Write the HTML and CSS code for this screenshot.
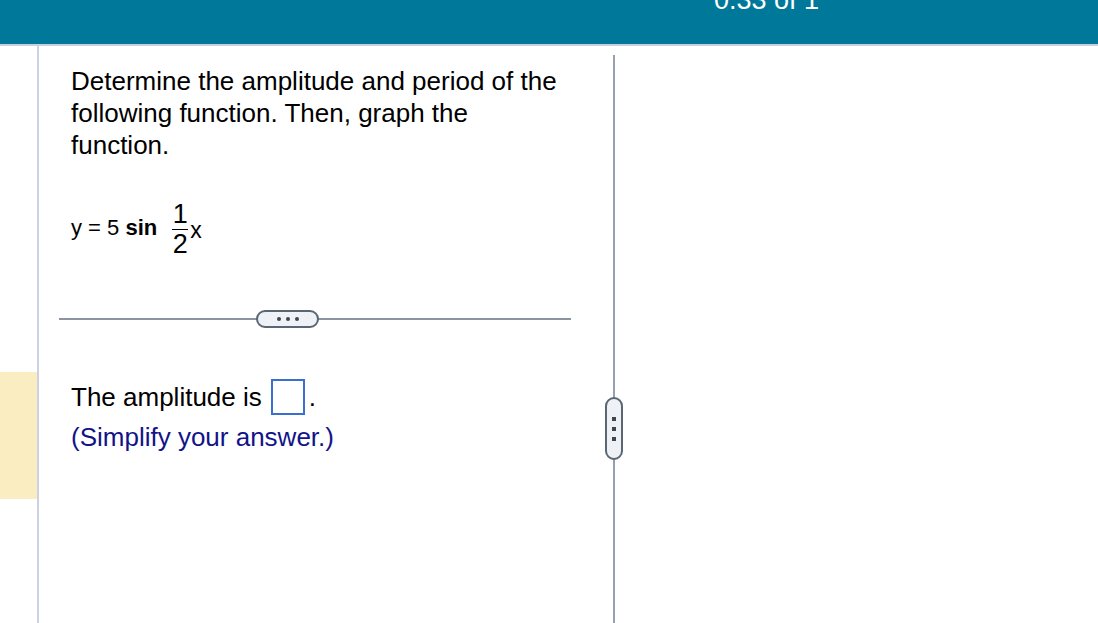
FILE: index.html
```html
<!DOCTYPE html>
<html>
<head>
<meta charset="utf-8">
<link rel="stylesheet" href="styles.css">
</head>
<body>
<header class="topbar">
  <div class="score">0.33 of 1</div>
</header>
<div class="main">
  <aside class="gutter">
    <div class="marker"></div>
  </aside>
  <section class="question">
    <p class="prompt">Determine the amplitude and period of the following function. Then, graph the function.</p>
    <div class="equation">
      <span>y = 5 <b>sin</b></span>
      <span class="frac"><span class="num">1</span><span class="den">2</span></span>
      <span class="var">x</span>
    </div>
    <div class="divider">
      <button class="pill"><span class="dot"></span><span class="dot"></span><span class="dot"></span></button>
    </div>
    <div class="answer">
      <div class="ans-line">The amplitude is <span class="box"></span>.</div>
      <div class="hint">(Simplify your answer.)</div>
    </div>
  </section>
  <div class="splitter">
    <div class="vpill"><span class="sq"></span><span class="sq"></span><span class="sq"></span></div>
  </div>
  <section class="right"></section>
</div>
</body>
</html>
```
FILE: styles.css
```css
* { box-sizing: border-box; }
html, body { margin: 0; padding: 0; }
body {
  width: 1098px;
  height: 623px;
  overflow: hidden;
  background: #fff;
  font-family: "Liberation Sans", Arial, sans-serif;
  color: #000;
}
.topbar {
  height: 46px;
  background: #007899;
  border-bottom: 2px solid #c9cfe0;
  position: relative;
}
.score {
  position: absolute;
  left: 714px;
  top: -15px;
  color: #fff;
  font-size: 27px;
  line-height: 30px;
}
.main {
  display: flex;
  height: 577px;
}
.gutter {
  width: 39px;
  border-right: 2px solid #cdd2e2;
  padding-top: 326px;
}
.marker {
  height: 127px;
  width: 37px;
  background: #f9edc1;
}
.question {
  width: 574px;
  padding: 19px 0 0 32px;
}
.prompt {
  margin: 0;
  width: 495px;
  font-size: 26px;
  line-height: 32px;
}
.equation {
  display: flex;
  align-items: center;
  margin-top: 40px;
  font-size: 22px;
  height: 54px;
}
.equation b { font-weight: bold; }
.frac {
  display: inline-flex;
  flex-direction: column;
  align-items: center;
  font-size: 27px;
  line-height: 25px;
  margin-left: 15px;
  margin-top: 2px;
}
.frac .num {
  border-bottom: 1.5px solid #000;
  padding: 0 0 2px;
  width: 16px;
  text-align: center;
}
.frac .den { padding-top: 2px; }
.var { margin-left: 2px; font-size: 23px; margin-top: 4px; }
.divider {
  margin: 55px 0 0 -12px;
  width: 512px;
  height: 18px;
  display: flex;
  align-items: center;
  padding-left: 197px;
  background: linear-gradient(#8b93a1, #8b93a1) center / 100% 2px no-repeat;
}
.pill {
  width: 63px;
  height: 18px;
  border: 2px solid #5b6675;
  border-radius: 9px;
  background: #eef1f5;
  display: flex;
  align-items: center;
  justify-content: center;
  gap: 5px;
  padding: 0;
}
.dot {
  width: 4px;
  height: 4px;
  border-radius: 50%;
  background: #3f4650;
}
.answer {
  margin-top: 51px;
  font-size: 26px;
}
.ans-line {
  display: flex;
  align-items: center;
  height: 36px;
}
.box {
  display: inline-block;
  width: 34px;
  height: 36px;
  border: 2px solid #3a6fd0;
  margin-left: 9px;
  margin-right: 4px;
}
.hint {
  color: #131389;
  margin-top: 9px;
  line-height: 26px;
}
.splitter {
  width: 2px;
  margin-top: 9px;
  background: #98a0ae;
  position: relative;
}
.vpill {
  position: absolute;
  left: -8px;
  top: 342px;
  width: 18px;
  height: 63px;
  border: 2px solid #5b6675;
  border-radius: 9px;
  background: #eef1f5;
  display: flex;
  flex-direction: column;
  align-items: center;
  justify-content: center;
  gap: 6px;
}
.sq {
  width: 4px;
  height: 4px;
  background: #3f4650;
}
.right { flex: 1; }
```
